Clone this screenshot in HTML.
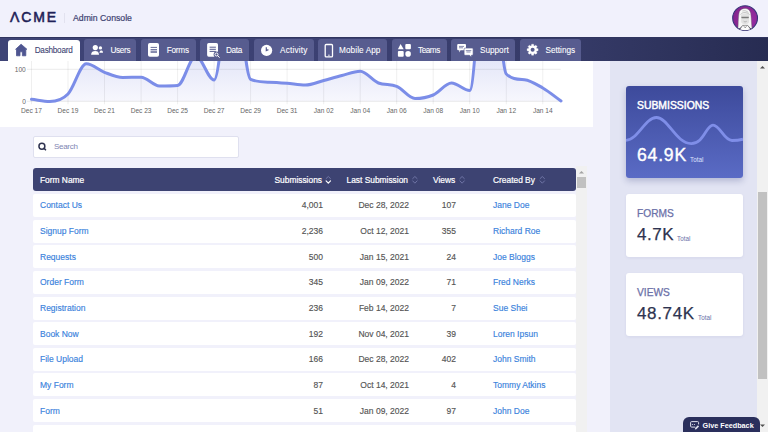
<!DOCTYPE html>
<html><head><meta charset="utf-8">
<style>
*{box-sizing:border-box}
html,body{margin:0;padding:0}
body{width:768px;height:432px;overflow:hidden;position:relative;background:#f1f1fb;font-family:"Liberation Sans",sans-serif;color:#3d4272}
.abs{position:absolute}
#hdr{left:0;top:0;width:768px;height:37px;background:#f1f1fc}
#logo{left:10px;top:10px;font-size:14px;line-height:14px;letter-spacing:1.9px;color:#1e2157;-webkit-text-stroke:0.55px #1e2157}
#div1{left:64px;top:13px;width:1px;height:10px;background:#e2e2ef}
#adm{left:73px;top:14.3px;font-size:8.7px;line-height:8.7px;color:#3d4272;-webkit-text-stroke:0.2px #3d4272}
#av{left:732px;top:5px;width:26px;height:26px}
#nav{left:0;top:37px;width:768px;height:24px;background:linear-gradient(90deg,#3e4476 0%,#3b4072 45%,#353a67 75%,#272c52 100%);border-top:1px solid #30355f}
.tab{position:absolute;top:2px;height:22px;background:#575c8f;border-radius:3px 3px 0 0;color:#fff;font-size:8.2px;white-space:nowrap;-webkit-text-stroke:0.08px currentColor}
.tab.on{background:#fff;color:#3d4272}
.tab svg{position:absolute;top:0;left:0}
.tab span{position:absolute;top:7.6px;line-height:8.2px}
#chart{left:0;top:61px;width:593px;height:66px;background:#fff;overflow:hidden}
#rp{left:610px;top:61px;width:147px;height:371px;background:#e2e4f3}
#sb{left:757px;top:61px;width:11px;height:371px;background:#f1f1f1}
#search{left:33px;top:136px;width:206px;height:22px;background:#fff;border:1px solid #dfe0ef;border-radius:2px}
#search span{position:absolute;left:20px;top:5.93px;font-size:8px;color:#8085b3;line-height:8px;letter-spacing:-0.3px}
#th{left:33px;top:168px;width:543px;height:23px;background:#3d4372;border-radius:3px;color:#fff;font-size:8.4px;-webkit-text-stroke:0.2px currentColor}
#th span{position:absolute;top:8.09px;line-height:8.4px;white-space:nowrap}
.row{position:absolute;left:33px;width:543px;height:23px;background:#fff;border-radius:2px;font-size:8.5px;color:#555;white-space:nowrap}
.row span{position:absolute;top:7.6px;line-height:8.5px;-webkit-text-stroke:0.15px currentColor}
.row .l{left:7px;color:#3a82dc}
.row .s{right:253px;text-align:right}
.row .d{right:167px;text-align:right}
.row .v{right:120px;text-align:right}
.row .c{left:460px;color:#3a82dc}
#tsb{left:576px;top:166px;width:11px;height:266px;background:#f1f1f1}
.card{position:absolute;left:626px;width:117px;background:#fff;border-radius:3px;box-shadow:0 1px 3px rgba(60,70,140,0.08)}
.card .t{position:absolute;left:11px;font-size:10.2px;color:#6b70a8;letter-spacing:0;line-height:10.2px;white-space:nowrap;-webkit-text-stroke:0.25px currentColor}
.card .n{position:absolute;left:11px;font-size:17px;color:#2e3350;line-height:17px;letter-spacing:0.5px;-webkit-text-stroke:0.25px currentColor;white-space:nowrap}
.card .k{position:absolute;font-size:6.3px;line-height:6.3px;color:#6b70a8}
#fb{left:683px;top:417px;width:77px;height:20px;background:#2a2f5c;border-radius:6px 6px 0 0;color:#fff;font-size:7.4px;font-weight:bold}
</style></head><body>
<div id="hdr" class="abs"></div>
<div id="logo" class="abs">&#923;CME</div>
<div id="div1" class="abs"></div>
<div id="adm" class="abs">Admin Console</div>
<div id="av" class="abs">
<svg width="26" height="26" viewBox="0 0 26 26" style="position:absolute;left:0;top:0;overflow:visible">
<defs><clipPath id="avc"><circle cx="13.1" cy="13.1" r="12.2"/></clipPath><radialGradient id="avg" cx="0.65" cy="0.55" r="0.6"><stop offset="0" stop-color="#9a2ea6"/><stop offset="1" stop-color="#86268f"/></radialGradient></defs>
<circle cx="13.1" cy="13.1" r="12.4" fill="url(#avg)" stroke="#36357a" stroke-width="1.1"/>
<g clip-path="url(#avc)">
<path d="M6 23.5 C6.3 18 6.3 10 7.4 6.6 C8.5 4.2 10.8 3.4 13.1 3.4 C15.9 3.5 18.1 4.9 18.7 8.2 C19.3 12 19.4 18 20 23.5 Z" fill="#f6f6f6" stroke="#6a6a6a" stroke-width="0.4"/>
<path d="M9 10.2 C10.5 8.2 15.6 8 17.1 9.8 L17 17.2 C15.8 19.8 10.4 19.8 9.2 17.2 Z" fill="#e2e2e2"/>
<path d="M8.6 9.6 C10.8 6.6 14.8 7 17.6 9.6 M10.4 6 C12.4 5.3 14.8 5.8 16.4 7.6" fill="none" stroke="#8a8a8a" stroke-width="0.45"/>
<path d="M9.4 11.8 H16.8 V13 C15.4 13.4 10.8 13.4 9.4 13 Z" fill="#505050" opacity="0.7"/>
<path d="M11.6 16.2 C12.6 17 13.8 17 14.8 16.2" fill="none" stroke="#777" stroke-width="0.4"/>
<path d="M5 27 L7 24 L10.4 21 L16 21 L19.4 24 L21.4 27 Z" fill="#2b2b4a"/>
<path d="M7.6 24.6 L10.6 20.4 L15.8 20.4 L18.8 24.6 L16.8 26 L9.6 26 Z" fill="#fbfbfb" stroke="#333" stroke-width="0.45"/>
<path d="M11.5 20.6 L13.2 23 L14.9 20.6" fill="none" stroke="#444" stroke-width="0.45"/>
</g>
</svg>
</div>

<div id="nav" class="abs">
</div>

<!-- tabs -->
<div class="abs" style="left:0;top:37px;width:768px;height:24px">
<div class="tab on" style="left:8px;width:72px;top:2.5px;height:21.5px">
<svg width="30" height="22"><path d="M13.1 4.2 L7.6 9.3 L8.5 9.3 L8.5 15.8 L12 15.8 L12 11.8 L14.4 11.8 L14.4 15.8 L17.8 15.8 L17.8 9.3 L18.9 9.3 Z" fill="#4e5590" stroke="#4e5590" stroke-width="0.8" stroke-linejoin="round"/></svg>
<span style="left:26.7px;top:7.1px;letter-spacing:-0.25px">Dashboard</span></div>
<div class="tab" style="left:84px;width:52px">
<svg width="30" height="22"><circle cx="11.3" cy="8.6" r="2.6" fill="#fff"/><path d="M7.1 15.8 C7.1 13 9 12 11.2 12 C13.4 12 15 13 15 15.8 Z" fill="#fff"/><circle cx="16.4" cy="8.9" r="1.7" fill="#fff"/><path d="M15.4 13.7 C15.6 12 16.8 11.4 17.6 11.6 C18.6 11.8 19 12.8 19 13.7 Z" fill="#fff"/></svg>
<span style="left:26.5px;letter-spacing:-0.35px">Users</span></div>
<div class="tab" style="left:141px;width:55px">
<svg width="30" height="22"><rect x="7" y="4" width="11" height="13.7" rx="1.8" fill="#fff"/><path d="M9.6 8.4 H16 M9.6 10.6 H16 M9.6 12.2 H16 M9.6 13.3 H16" stroke="#575c8f" stroke-width="0.9"/></svg>
<span style="left:25.7px;letter-spacing:-0.2px">Forms</span></div>
<div class="tab" style="left:200px;width:49px">
<svg width="30" height="22"><rect x="7.1" y="4" width="10.9" height="13.7" rx="1.6" fill="#fff"/><path d="M9.6 8.2 H15.9 M9.6 10.3 H15.9 M9.6 12.4 H15.9" stroke="#575c8f" stroke-width="1"/><circle cx="16.6" cy="15.6" r="3" fill="#575c8f"/><circle cx="16.5" cy="15.5" r="1.5" fill="none" stroke="#fff" stroke-width="1"/><path d="M17.6 16.6 L19.3 18.4" stroke="#fff" stroke-width="1" stroke-linecap="round"/></svg>
<span style="left:26px;letter-spacing:-0.3px">Data</span></div>
<div class="tab" style="left:254px;width:60px">
<svg width="30" height="22"><circle cx="12.6" cy="11.4" r="5.6" fill="#fff"/><path d="M12.3 8.2 V11.6 L14.4 10.6" fill="none" stroke="#575c8f" stroke-width="1.2"/></svg>
<span style="left:26px;letter-spacing:0.2px">Activity</span></div>
<div class="tab" style="left:318px;width:69px">
<svg width="30" height="22"><rect x="7.2" y="5.5" width="7.3" height="12.4" rx="1" fill="none" stroke="#fff" stroke-width="1.3"/><path d="M10 16.2 H11.8" stroke="#fff" stroke-width="0.8"/></svg>
<span style="left:21px;letter-spacing:0.1px">Mobile App</span></div>
<div class="tab" style="left:392px;width:55px">
<svg width="30" height="22"><path d="M8.6 4.9 L5.9 10.3 L11.7 10.3 Z" fill="#fff"/><rect x="13.3" y="4.9" width="5.6" height="5.4" rx="1" fill="#fff"/><rect x="5.9" y="12.1" width="5.8" height="5.6" rx="1" fill="#fff"/><circle cx="16.1" cy="14.9" r="2.8" fill="#fff"/></svg>
<span style="left:26px;letter-spacing:-0.45px">Teams</span></div>
<div class="tab" style="left:451px;width:64px">
<svg width="30" height="22"><path d="M7.2 4.9 H14 A1 1 0 0 1 15 5.9 V10.2 A1 1 0 0 1 14 11.2 H9.5 L8.3 13.4 L8.3 11.2 H7.2 A1 1 0 0 1 6.2 10.2 V5.9 A1 1 0 0 1 7.2 4.9 Z" fill="#fff"/><path d="M8 7.4 H13 M8 8.8 H12" stroke="#575c8f" stroke-width="0.7"/><path d="M14.1 9.1 H21.1 A1 1 0 0 1 22.1 10.1 V15.3 A1 1 0 0 1 21.1 16.3 H20.3 L20.3 18.3 L18.5 16.3 H14.1 A1 1 0 0 1 13.1 15.3 V10.1 A1 1 0 0 1 14.1 9.1 Z" fill="#fff" stroke="#575c8f" stroke-width="0.6"/><path d="M14.8 11.6 H20.3 M15.4 13 H19.5" stroke="#575c8f" stroke-width="0.7"/></svg>
<span style="left:29px">Support</span></div>
<div class="tab" style="left:520px;width:61px">
<svg width="30" height="22"><g transform="translate(12.6 10.7)"><path d="M-1.24 -4.01 L-0.95 -5.52 L0.95 -5.52 L1.24 -4.01 L1.96 -3.71 L3.23 -4.57 L4.57 -3.23 L3.71 -1.96 L4.01 -1.24 L5.52 -0.95 L5.52 0.95 L4.01 1.24 L3.71 1.96 L4.57 3.23 L3.23 4.57 L1.96 3.71 L1.24 4.01 L0.95 5.52 L-0.95 5.52 L-1.24 4.01 L-1.96 3.71 L-3.23 4.57 L-4.57 3.23 L-3.71 1.96 L-4.01 1.24 L-5.52 0.95 L-5.52 -0.95 L-4.01 -1.24 L-3.71 -1.96 L-4.57 -3.23 L-3.23 -4.57 L-1.96 -3.71 Z" fill="#fff" stroke="#fff" stroke-width="0.3" stroke-linejoin="round"/><circle r="2" fill="#575c8f"/></g></svg>
<span style="left:25.5px">Settings</span></div>
</div>

<div id="chart" class="abs">
<svg width="593" height="66" viewBox="0 61 593 66" style="position:absolute;left:0;top:0">
<defs><linearGradient id="fg" x1="0" y1="55" x2="0" y2="101.3" gradientUnits="userSpaceOnUse"><stop offset="0" stop-color="#e2e5f8"/><stop offset="1" stop-color="#f7f7fd"/></linearGradient></defs>
<path id="fill" fill="url(#fg)" d="M31.5 99.3 C37.6 100.0 43.7 101.5 49.8 101.5 C55.8 101.5 61.9 100.3 68.0 94.0 C74.1 87.7 80.2 63.8 86.3 63.8 C92.4 63.8 98.5 70.0 104.5 72.3 C110.6 74.6 116.7 77.5 122.8 77.5 C128.9 77.5 135.0 77.2 141.1 77.2 C147.1 77.2 153.2 86.0 159.3 86.0 C165.4 86.0 171.5 86.0 177.6 85.5 C183.7 85.0 189.8 56.0 195.8 56.0 C201.9 56.0 208.0 80.0 214.1 80.0 C220.2 80.0 226.3 -30.0 232.4 -30.0 C238.4 -30.0 244.5 76.4 250.6 79.3 C256.7 82.2 262.8 82.1 268.9 82.2 C275.0 82.3 281.1 82.8 287.1 83.3 C293.2 83.8 299.3 85.0 305.4 85.0 C311.5 85.0 317.6 82.1 323.7 80.5 C329.7 78.9 335.8 77.0 341.9 75.5 C348.0 74.0 354.1 71.3 360.2 71.3 C366.3 71.3 372.4 80.7 378.4 83.0 C384.5 85.3 390.6 83.9 396.7 86.3 C402.8 88.7 408.9 98.5 415.0 98.5 C421.0 98.5 427.1 97.6 433.2 95.0 C439.3 92.4 445.4 83.0 451.5 83.0 C457.6 83.0 463.7 90.5 469.7 90.5 C475.8 90.5 481.9 -90.0 488.0 -90.0 C494.1 -90.0 500.2 68.3 506.3 74.0 C512.3 79.7 518.4 79.2 524.5 79.7 C530.6 80.2 536.7 84.5 542.8 88.0 C548.9 91.6 555.0 96.7 561.0 101.0 L560.7 101.3 L31.5 101.3 Z"/>
<g id="grid" stroke="rgba(0,0,0,0.1)" stroke-width="0.8"><path d="M31.5 101.3 H560.7 M31.5 69.3 H560.7"/><path d="M27 101.3 H31.5 M27 69.3 H31.5"/></g>
<g id="gridv" stroke="rgba(0,0,0,0.09)" stroke-width="0.7"><path d="M31.5 40 V104.3"/><path d="M68.0 40 V104.3"/><path d="M104.5 40 V104.3"/><path d="M141.1 40 V104.3"/><path d="M177.6 40 V104.3"/><path d="M214.1 40 V104.3"/><path d="M250.6 40 V104.3"/><path d="M287.1 40 V104.3"/><path d="M323.7 40 V104.3"/><path d="M360.2 40 V104.3"/><path d="M396.7 40 V104.3"/><path d="M433.2 40 V104.3"/><path d="M469.7 40 V104.3"/><path d="M506.3 40 V104.3"/><path d="M542.8 40 V104.3"/></g>
<path id="line" fill="none" stroke="#7b8de8" stroke-width="3" stroke-linecap="round" d="M31.5 99.3 C37.6 100.0 43.7 101.5 49.8 101.5 C55.8 101.5 61.9 100.3 68.0 94.0 C74.1 87.7 80.2 63.8 86.3 63.8 C92.4 63.8 98.5 70.0 104.5 72.3 C110.6 74.6 116.7 77.5 122.8 77.5 C128.9 77.5 135.0 77.2 141.1 77.2 C147.1 77.2 153.2 86.0 159.3 86.0 C165.4 86.0 171.5 86.0 177.6 85.5 C183.7 85.0 189.8 56.0 195.8 56.0 C201.9 56.0 208.0 80.0 214.1 80.0 C220.2 80.0 226.3 -30.0 232.4 -30.0 C238.4 -30.0 244.5 76.4 250.6 79.3 C256.7 82.2 262.8 82.1 268.9 82.2 C275.0 82.3 281.1 82.8 287.1 83.3 C293.2 83.8 299.3 85.0 305.4 85.0 C311.5 85.0 317.6 82.1 323.7 80.5 C329.7 78.9 335.8 77.0 341.9 75.5 C348.0 74.0 354.1 71.3 360.2 71.3 C366.3 71.3 372.4 80.7 378.4 83.0 C384.5 85.3 390.6 83.9 396.7 86.3 C402.8 88.7 408.9 98.5 415.0 98.5 C421.0 98.5 427.1 97.6 433.2 95.0 C439.3 92.4 445.4 83.0 451.5 83.0 C457.6 83.0 463.7 90.5 469.7 90.5 C475.8 90.5 481.9 -90.0 488.0 -90.0 C494.1 -90.0 500.2 68.3 506.3 74.0 C512.3 79.7 518.4 79.2 524.5 79.7 C530.6 80.2 536.7 84.5 542.8 88.0 C548.9 91.6 555.0 96.7 561.0 101.0"/>
<g id="labels" font-size="6.6" fill="#666" text-anchor="middle"><text x="31.5" y="113.4">Dec 17</text><text x="68.0" y="113.4">Dec 19</text><text x="104.5" y="113.4">Dec 21</text><text x="141.1" y="113.4">Dec 23</text><text x="177.6" y="113.4">Dec 25</text><text x="214.1" y="113.4">Dec 27</text><text x="250.6" y="113.4">Dec 29</text><text x="287.1" y="113.4">Dec 31</text><text x="323.7" y="113.4">Jan 02</text><text x="360.2" y="113.4">Jan 04</text><text x="396.7" y="113.4">Jan 06</text><text x="433.2" y="113.4">Jan 08</text><text x="469.7" y="113.4">Jan 10</text><text x="506.3" y="113.4">Jan 12</text><text x="542.8" y="113.4">Jan 14</text><text x="25.8" y="71.6" text-anchor="end">100</text><text x="25.8" y="103.6" text-anchor="end">0</text></g>
</svg>
</div>

<div id="rp" class="abs"></div>
<div id="sb" class="abs"><svg width="11" height="371" style="position:absolute;left:0;top:0"><path d="M3 7.5 L5.5 5 L8 7.5 Z" fill="#505050"/><path d="M3 363.5 L5.5 366 L8 363.5 Z" fill="#505050"/></svg><div style="position:absolute;left:1px;top:131px;width:9px;height:187px;background:#c1c1c1"></div></div>

<div id="search" class="abs">
<svg width="14" height="20" style="position:absolute;left:4px;top:5px" viewBox="0 0 14 20"><circle cx="3.9" cy="4.2" r="2.95" fill="none" stroke="#2e3350" stroke-width="1.5"/><path d="M6.1 6.4 L7.5 7.8" stroke="#2e3350" stroke-width="1.6" stroke-linecap="round"/></svg>
<span>Search</span></div>

<div id="th" class="abs">
<span style="left:7px">Form Name</span>
<span style="left:241.5px">Submissions</span>
<span style="left:313.5px">Last Submission</span>
<span style="left:400px">Views</span>
<span style="left:460px">Created By</span>
<svg width="543" height="23" style="position:absolute;left:0;top:0">
<g fill="none" stroke-width="0.9" stroke-linecap="round" stroke-linejoin="round">
<path d="M293.1 10.6 L295.3 8.5 L297.5 10.6" stroke="#7479aa"/><path d="M293.1 12.9 L295.3 15.2 L297.5 12.9" stroke="#fff" stroke-width="1.2"/>
<path d="M379.7 10.6 L381.9 8.5 L384.1 10.6" stroke="#7479aa"/><path d="M379.7 12.9 L381.9 15.2 L384.1 12.9" stroke="#7479aa"/>
<path d="M426.9 10.6 L429.1 8.5 L431.3 10.6" stroke="#7479aa"/><path d="M426.9 12.9 L429.1 15.2 L431.3 12.9" stroke="#7479aa"/>
<path d="M507.1 10.6 L509.3 8.5 L511.5 10.6" stroke="#7479aa"/><path d="M507.1 12.9 L509.3 15.2 L511.5 12.9" stroke="#7479aa"/>
</g></svg>
</div>

<div id="rows"><div class="row" style="top:193.90px"><span class="l">Contact Us</span><span class="s">4,001</span><span class="d">Dec 28, 2022</span><span class="v">107</span><span class="c">Jane Doe</span></div>
<div class="row" style="top:219.55px"><span class="l">Signup Form</span><span class="s">2,236</span><span class="d">Oct 12, 2021</span><span class="v">355</span><span class="c">Richard Roe</span></div>
<div class="row" style="top:245.20px"><span class="l">Requests</span><span class="s">500</span><span class="d">Jan 15, 2021</span><span class="v">24</span><span class="c">Joe Bloggs</span></div>
<div class="row" style="top:270.85px"><span class="l">Order Form</span><span class="s">345</span><span class="d">Jan 09, 2022</span><span class="v">71</span><span class="c">Fred Nerks</span></div>
<div class="row" style="top:296.50px"><span class="l">Registration</span><span class="s">236</span><span class="d">Feb 14, 2022</span><span class="v">7</span><span class="c">Sue Shei</span></div>
<div class="row" style="top:322.15px"><span class="l">Book Now</span><span class="s">192</span><span class="d">Nov 04, 2021</span><span class="v">39</span><span class="c">Loren Ipsun</span></div>
<div class="row" style="top:347.80px"><span class="l">File Upload</span><span class="s">166</span><span class="d">Dec 28, 2022</span><span class="v">402</span><span class="c">John Smith</span></div>
<div class="row" style="top:373.45px"><span class="l">My Form</span><span class="s">87</span><span class="d">Oct 14, 2021</span><span class="v">4</span><span class="c">Tommy Atkins</span></div>
<div class="row" style="top:399.10px"><span class="l">Form</span><span class="s">51</span><span class="d">Jan 09, 2022</span><span class="v">97</span><span class="c">John Doe</span></div>
<div class="row" style="top:424.75px"><span class="l">Survey</span><span class="s">20</span><span class="d">Mar 01, 2022</span><span class="v">12</span><span class="c">Jane Roe</span></div>
</div>

<div id="tsb" class="abs"><svg width="11" height="30" style="position:absolute;left:0;top:0"><path d="M3 7.5 L5.5 5 L8 7.5 Z" fill="#a3a3a3"/></svg><div style="position:absolute;left:1px;top:11px;width:9px;height:11px;background:#c1c1c1"></div></div>

<div class="card" style="top:86px;height:92px;background:linear-gradient(180deg,#3d4a9b 0%,#5a6bc5 100%);box-shadow:0 3px 6px rgba(40,50,120,0.25)">
<svg width="117" height="92" style="position:absolute;left:0;top:0"><path d="M0 54.3 C12 54 19 31.5 30.4 31.5 C42 31.5 50 57.6 65.2 57.6 C78 57.6 80 39.1 87 39.1 C94 39.1 98 54.5 106 54.5 C110 54.5 114 54 117 53.2" fill="none" stroke="#7f8ee8" stroke-width="2.8"/></svg>
<div class="t" style="top:15px;color:#fff;font-size:10.4px;line-height:10.4px;letter-spacing:0;-webkit-text-stroke:0.45px #fff">SUBMISSIONS</div>
<div class="n" style="top:61.1px;color:#fff;font-size:17.6px;line-height:17.6px;letter-spacing:0.8px;-webkit-text-stroke:0.4px #fff">64.9K</div>
<div class="k" style="left:64px;top:71.4px;color:#dfe3ff">Total</div>
</div>
<div class="card" style="top:194px;height:63px">
<div class="t" style="top:14.5px">FORMS</div>
<div class="n" style="top:32.3px">4.7K</div>
<div class="k" style="left:51px;top:42.4px">Total</div>
</div>
<div class="card" style="top:273px;height:63px">
<div class="t" style="top:14.5px">VIEWS</div>
<div class="n" style="top:32.3px;letter-spacing:0.65px">48.74K</div>
<div class="k" style="left:72px;top:42.4px">Total</div>
</div>

<div id="fb" class="abs">
<svg width="16" height="14" style="position:absolute;left:5px;top:3px" viewBox="0 0 16 14"><path d="M7.2 7.1 H3.6 A1 1 0 0 1 2.6 6.1 V2.6 A1 1 0 0 1 3.6 1.6 H9.6 A1 1 0 0 1 10.6 2.6 V4.4" fill="none" stroke="#dcdeea" stroke-width="1"/><circle cx="4.4" cy="4.5" r="0.6" fill="#dcdeea"/><circle cx="6.4" cy="4.5" r="0.6" fill="#dcdeea"/><path d="M9.9 5.2 L11.1 6.4 L8.3 9.2 L6.9 9.5 L7.1 8 Z" fill="#dcdeea"/></svg>
<span style="position:absolute;left:19.5px;top:4px;line-height:9px;font-size:7.25px">Give Feedback</span>
</div>
</body></html>
